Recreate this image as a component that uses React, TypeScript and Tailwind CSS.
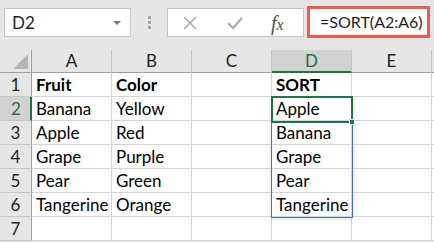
import React from "react";

const cols = ["A", "B", "C", "D", "E"];

const rows: string[][] = [
  ["Fruit", "Color", "", "SORT", ""],
  ["Banana", "Yellow", "", "Apple", ""],
  ["Apple", "Red", "", "Banana", ""],
  ["Grape", "Purple", "", "Grape", ""],
  ["Pear", "Green", "", "Pear", ""],
  ["Tangerine", "Orange", "", "Tangerine", ""],
  ["", "", "", "", ""],
];

function FormulaBar() {
  return (
    <div className="flex h-[50px] items-start bg-[#e6e6e6] pl-[4px]">
      <div className="relative mt-[8px] flex h-[29px] w-[127px] items-center border border-[#c6c6c6] bg-white pl-[7px] text-[17px] text-[#1f1f1f]">
        D2
        <div className="absolute right-[9px] top-[12px] h-0 w-0 border-x-[4px] border-t-[4px] border-x-transparent border-t-[#7a7a7a]" />
      </div>
      <div className="ml-[17px] mt-[16px] flex flex-col gap-[2px]">
        <div className="h-[3px] w-[3px] bg-[#a6a6a6]" />
        <div className="h-[3px] w-[3px] bg-[#a6a6a6]" />
        <div className="h-[3px] w-[3px] bg-[#a6a6a6]" />
      </div>
      <div className="ml-[16px] mt-[8px] flex h-[29px] w-[137px] items-center border border-[#c6c6c6] bg-white">
        <svg width="16" height="16" viewBox="0 0 16 16" className="ml-[14px]">
          <path d="M2 2 L14 14 M14 2 L2 14" stroke="#ababab" strokeWidth="1.6" fill="none" />
        </svg>
        <svg width="18" height="16" viewBox="0 0 18 16" className="ml-[28px]">
          <path d="M2 8 L7 13 L16 3" stroke="#ababab" strokeWidth="2.2" fill="none" />
        </svg>
        <span className="ml-[27px] font-['Liberation_Serif',serif] text-[20px] italic leading-none text-[#4d4d4d]">
          f<span className="text-[16px]">x</span>
        </span>
      </div>
      <div className="ml-[3px] mt-[6px] flex h-[32px] w-[123px] items-center border-[3px] border-[#f05a4f] bg-white pl-[10px] text-[16px] text-[#1f1f1f]">
        =SORT(A2:A6)
      </div>
    </div>
  );
}

function Sheet() {
  return (
    <div className="relative grid grid-cols-[32px_80px_80px_80px_80px_80px_1fr] grid-rows-[23px_repeat(7,24px)] bg-white">
      <div className="relative border-b border-r border-[#9f9f9f] bg-[#e6e6e6]">
        <div className="absolute bottom-[3px] right-[3px] h-0 w-0 border-b-[15px] border-l-[15px] border-b-[#b5b5b5] border-l-transparent" />
      </div>
      {cols.map((c) => (
        <div
          key={c}
          className={
            c === "D"
              ? "flex items-center justify-center border-b-2 border-r border-b-[#217346] border-r-[#c6c6c6] bg-[#d2d2d2] pt-[1px] text-[17px] text-[#217346]"
              : "flex items-center justify-center border-b border-r border-b-[#9f9f9f] border-r-[#c6c6c6] bg-[#e6e6e6] text-[17px] text-[#222]"
          }
        >
          {c}
        </div>
      ))}
      <div className="border-b border-b-[#9f9f9f] bg-[#e6e6e6]" />
      {rows.map((r, i) => (
        <React.Fragment key={i}>
          <div
            className={
              i === 1
                ? "flex items-center justify-center border-b border-r-2 border-b-[#c6c6c6] border-r-[#217346] bg-[#d2d2d2] pl-[2px] text-[17px] text-[#217346]"
                : "flex items-center justify-center border-b border-r border-b-[#c6c6c6] border-r-[#9f9f9f] bg-[#e6e6e6] text-[17px] text-[#222]"
            }
          >
            {i + 1}
          </div>
          {r.map((v, j) => (
            <div
              key={j}
              className={
                "flex items-center overflow-visible whitespace-nowrap border-b border-r border-[#d4d4d4] pl-[4px] text-[17px] text-black" +
                (i === 0 ? " font-bold" : "")
              }
            >
              {v}
            </div>
          ))}
          <div className="border-b border-[#d4d4d4]" />
        </React.Fragment>
      ))}
      {/* spill range D2:D6 */}
      <div className="pointer-events-none absolute left-[271px] top-[47px] h-[121px] w-[82px] border border-[#4a6fc0] shadow-[0_1px_4px_rgba(0,0,0,0.15)]" />
      {/* active cell D2 */}
      <div className="pointer-events-none absolute left-[271px] top-[46px] h-[27px] w-[82px] border-2 border-[#217346]">
        <div className="absolute -bottom-[4px] -right-[4px] h-[6px] w-[6px] border border-white bg-[#217346]" />
      </div>
    </div>
  );
}

export default function App() {
  return (
    <div className="h-[242px] w-[434px] overflow-hidden bg-[#e6e6e6] font-['Lato',sans-serif]">
      <FormulaBar />
      <Sheet />
    </div>
  );
}
